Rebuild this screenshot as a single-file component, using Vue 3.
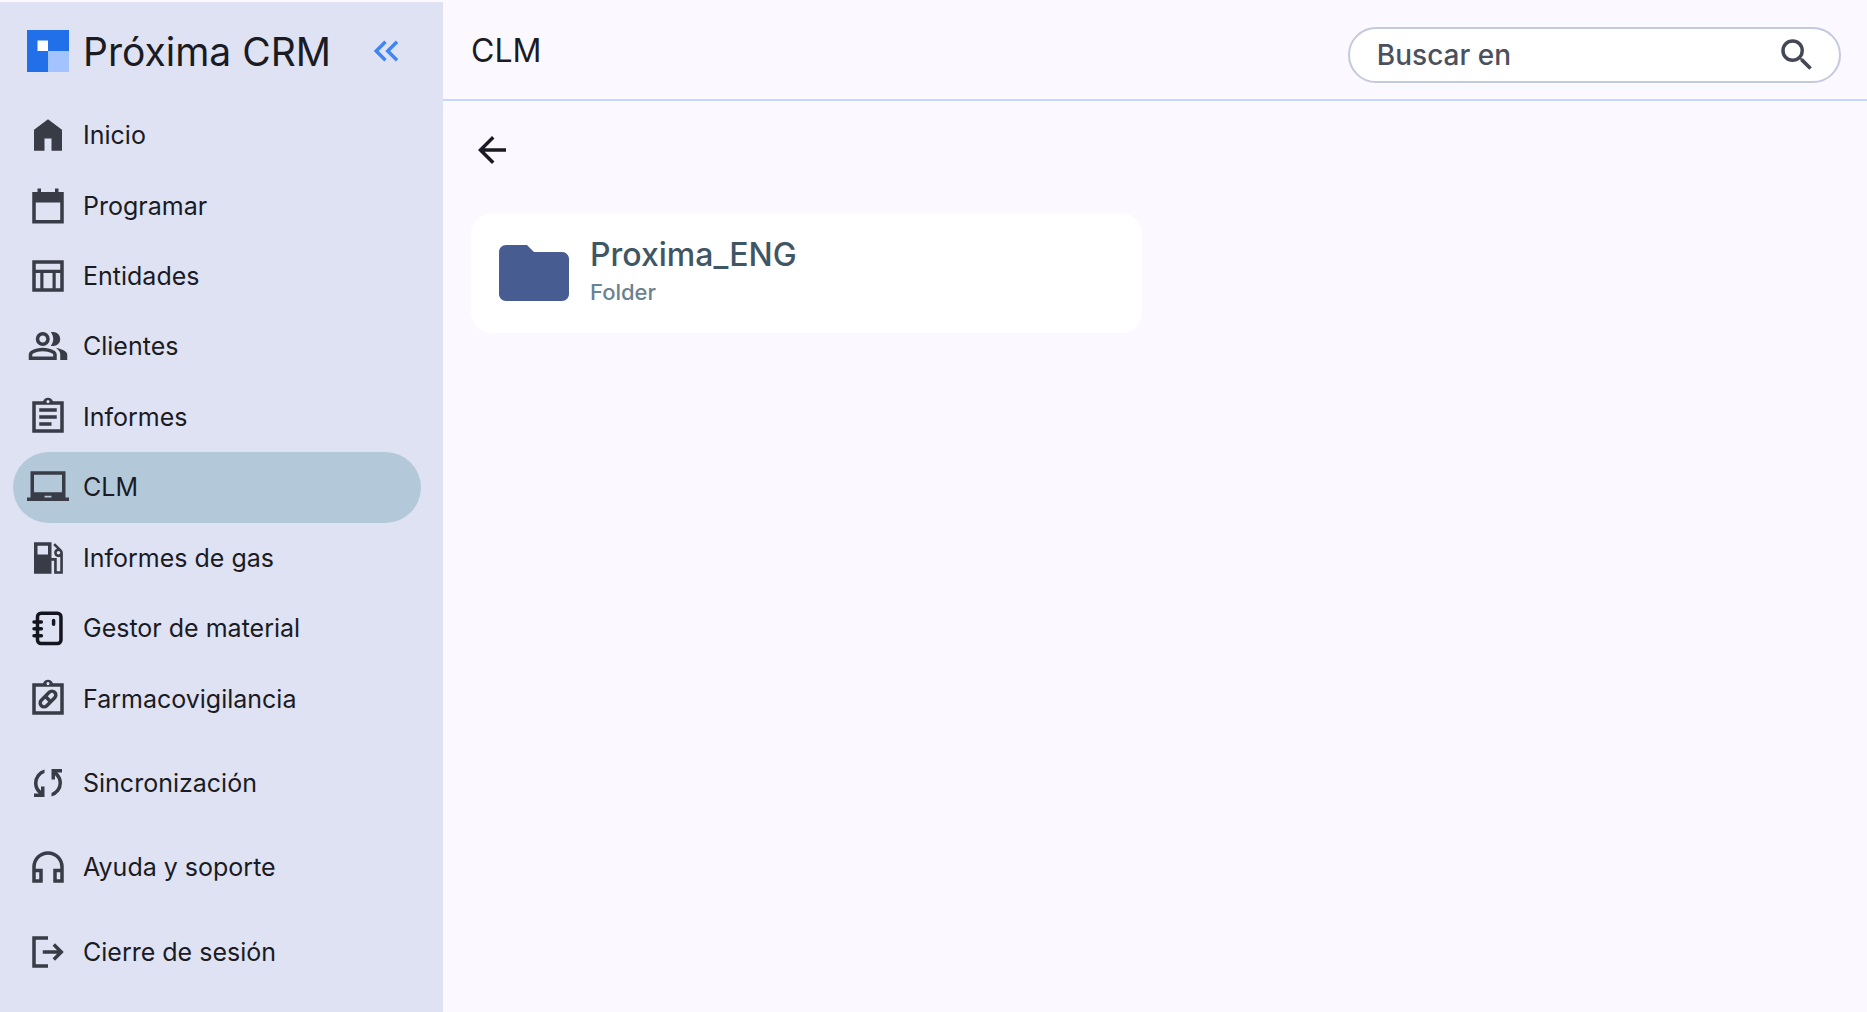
<template>
  <div class="layout">
    <aside class="sidebar">
      <div class="brand">
        <svg class="icon" viewBox="0 0 24 24" aria-hidden="true">
          <path fill="#2170ea" d="M0 0h24v24H0z" />
          <path fill="#a3c3ff" d="M12 12h12v12H12z" />
          <path fill="#ffffff" d="M6 6h6v6H6z" />
        </svg>
        <span class="brand-name">Próxima CRM</span>
        <button class="icon-btn collapse" type="button" aria-label="Contraer menú">
          <svg class="icon" viewBox="0 0 24 24" aria-hidden="true">
            <path d="M17.59 18 19 16.59 14.42 12 19 7.41 17.59 6l-6 6zM11 18l1.41-1.41L7.83 12l4.58-4.59L11 6l-6 6z" />
          </svg>
        </button>
      </div>

      <nav class="menu">
        <a
          v-for="item in items"
          :key="item.label"
          href="#"
          :class="['menu-item', { active: item.label === current, spaced: item.spaced }]"
          @click.prevent="current = item.label"
        >
          <svg v-if="item.icon === 'notebook'" class="icon notebook" viewBox="0 0 24 24" aria-hidden="true">
            <rect x="6" y="3.5" width="13.4" height="17.4" rx="2" />
            <path d="M4 8.6h4.2M4 12.4h4.2M4 16.4h4.2M15.2 7.7v2.2" />
          </svg>
          <svg v-else-if="item.icon === 'pill'" class="icon" viewBox="0 0 24 24" aria-hidden="true">
            <path fill-rule="evenodd" :d="clipboard" />
            <g class="capsule" transform="rotate(-45 12 12)">
              <rect x="6.6" y="9.8" width="10.8" height="4.4" rx="2.2" />
              <path d="M12 10v4" />
            </g>
          </svg>
          <svg v-else class="icon" :viewBox="item.box || '0 -960 960 960'" aria-hidden="true">
            <path fill-rule="evenodd" :d="item.icon" />
          </svg>
          <span>{{ item.label }}</span>
        </a>
      </nav>
    </aside>

    <main class="content">
      <header class="topbar">
        <h1 class="page-title">CLM</h1>
        <form class="search" role="search" @submit.prevent>
          <input v-model="query" class="search-input" type="text" placeholder="Buscar en" aria-label="Buscar en" />
          <button class="icon-btn" type="submit" aria-label="Buscar">
            <svg class="icon" viewBox="0 0 24 24" aria-hidden="true">
              <path d="M15.5 14h-.79l-.28-.27A6.47 6.47 0 0 0 16 9.5 6.5 6.5 0 1 0 9.5 16c1.61 0 3.09-.59 4.23-1.57l.27.28v.79l5 4.99L20.49 19zm-6 0a4.5 4.5 0 1 1 0-9 4.5 4.5 0 0 1 0 9z" />
            </svg>
          </button>
        </form>
      </header>

      <section class="browser">
        <button class="icon-btn back" type="button" aria-label="Volver">
          <svg class="icon" viewBox="0 -960 960 960" aria-hidden="true">
            <path d="m313-440 224 224-57 56-320-320 320-320 57 56-224 224h487v80H313Z" />
          </svg>
        </button>

        <div class="grid">
          <a v-for="entry in entries" :key="entry.name" href="#" class="card" @click.prevent>
            <svg class="folder" viewBox="0 0 24 24" aria-hidden="true">
              <path d="M10 4H4c-1.1 0-1.99.9-1.99 2L2 18c0 1.1.9 2 2 2h16c1.1 0 2-.9 2-2V8c0-1.1-.9-2-2-2h-8l-2-2z" />
            </svg>
            <span class="card-text">
              <span class="card-name">{{ entry.name }}</span>
              <span class="card-kind">{{ entry.kind }}</span>
            </span>
          </a>
        </div>
      </section>
    </main>
  </div>
</template>

<script setup>
import { ref } from 'vue'

const current = ref('CLM')
const query = ref('')

const clipboard = 'M3 21V3h6.2a2.95 2.95 0 0 1 5.6 0H21v18H3zm2-2h14V5H5v14zM12 4.1a.9.9 0 1 0 0-1.8.9.9 0 0 0 0 1.8z'

const items = [
  { label: 'Inicio', box: '0 0 24 24', icon: 'M4 21V9l8-6 8 6v12h-6v-7h-4v7z' },
  { label: 'Programar', box: '0 0 24 24', icon: 'M3 22V4h3V2h2v2h8V2h2v2h3v18H3zm2-2h14V10H5z' },
  {
    label: 'Entidades',
    box: '0 0 24 24',
    icon: 'M3 3h18v18H3zM5 5v3.4h14V5zM5 10.3V19h2.6v-8.7zM9.4 10.3V19h5.2v-8.7zM16.4 10.3V19H19v-8.7z',
  },
  {
    label: 'Clientes',
    icon: 'M40-160v-112q0-34 17.5-62.5T104-378q62-31 126-46.5T360-440q66 0 130 15.5T616-378q29 15 46.5 43.5T680-272v112H40Zm720 0v-120q0-44-24.5-84.5T666-434q51 6 96 20.5t84 35.5q36 20 55 44.5t19 53.5v120H760ZM360-480q-66 0-113-47t-47-113q0-66 47-113t113-47q66 0 113 47t47 113q0 66-47 113t-113 47Zm400-160q0 66-47 113t-113 47q-11 0-28-2.5t-28-5.5q27-32 41.5-71t14.5-81q0-42-14.5-81T544-792q14-5 28-6.5t28-1.5q66 0 113 47t47 113ZM120-240h480v-32q0-11-5.5-20T580-306q-54-27-109-40.5T360-360q-56 0-111 13.5T140-306q-9 5-14.5 14t-5.5 20v32Zm240-320q33 0 56.5-23.5T440-640q0-33-23.5-56.5T360-720q-33 0-56.5 23.5T280-640q0 33 23.5 56.5T360-560Z',
  },
  { label: 'Informes', box: '0 0 24 24', icon: clipboard + 'M7 17h7v-2H7zM7 13h10v-2H7zM7 9h10V7H7z' },
  { label: 'CLM', box: '0 0 24 24', icon: 'M0 20v-2h2V3h20v15h2v2zM10 18h4v-1h-4zM4 15h16V5H4z' },
  {
    label: 'Informes de gas',
    box: '0 0 24 24',
    icon: 'm19.77 7.23.01-.01-3.72-3.72L15 4.56l2.11 2.11a2.5 2.5 0 0 0 .89 4.83c.36 0 .69-.08 1-.21v8.21h-2V12h-3V3H4v18h10v-7.5h1.5V21h5V9c0-.69-.28-1.32-.73-1.77zM12 10H6V5h6v5zm6 0c-.55 0-1-.45-1-1s.45-1 1-1 1 .45 1 1-.45 1-1 1z',
  },
  { label: 'Gestor de material', icon: 'notebook' },
  { label: 'Farmacovigilancia', icon: 'pill' },
  {
    label: 'Sincronización',
    spaced: true,
    icon: 'M160-160v-80h110l-16-14q-52-46-73-105t-21-119q0-111 66.5-197.5T400-790v84q-72 26-116 88.5T240-478q0 45 17 87.5t53 78.5l10 10v-98h80v240H160Zm400-10v-84q72-26 116-88.5T720-482q0-45-17-87.5T650-648l-10-10v98h-80v-240h240v80H690l16 14q49 49 71.5 106.5T800-482q0 111-66.5 197.5T560-170Z',
  },
  {
    label: 'Ayuda y soporte',
    spaced: true,
    icon: 'M360-120H120v-360q0-75 28.5-140.5t77-114q48.5-48.5 114-77T480-840q75 0 140.5 28.5t114 77q48.5 48.5 77 114T840-480v360H600v-320h160v-40q0-117-81.5-198.5T480-760q-117 0-198.5 81.5T200-480v40h160v320Zm-80-240h-80v160h80v-160Zm400 0v160h80v-160h-80Z',
  },
  {
    label: 'Cierre de sesión',
    spaced: true,
    icon: 'M120-120v-720h360v80H200v560h280v80H120Zm520-160-55-58 102-102H360v-80h327L585-622l55-58 200 200-200 200Z',
  },
]

const entries = [{ name: 'Proxima_ENG', kind: 'Folder' }]
</script>

<style>
body {
  background: #fbf8ff;
}
</style>

<style scoped>
.layout {
  display: flex;
  box-sizing: border-box;
  min-height: 100vh;
  padding-top: 2px;
  font-family: Inter, 'Noto Sans', sans-serif;
  color: #1a1b23;
}

.sidebar {
  display: flex;
  flex-direction: column;
  flex: 0 0 443px;
  background: #dfe2f3;
}

.brand {
  display: flex;
  align-items: center;
  gap: 14px;
  height: 98px;
  padding: 0 36px 0 27px;
}

.brand-name {
  flex: 1;
  font-size: 39px;
  white-space: nowrap;
}

.icon {
  display: block;
  flex: none;
  width: 42px;
  height: 42px;
  fill: currentColor;
}

.icon-btn {
  padding: 0;
  border: 0;
  background: none;
  color: inherit;
  cursor: pointer;
}

.collapse {
  color: #3f86f4;
}

.menu {
  display: flex;
  flex: 1;
  flex-direction: column;
  padding: 0 22px 25px 13px;
}

.menu-item {
  display: flex;
  flex: 1;
  align-items: center;
  gap: 14px;
  min-height: 56px;
  padding: 0 14px;
  border-radius: 36px;
  font-size: 25px;
  color: #1a1b23;
  text-decoration: none;
}

.menu-item.spaced {
  margin-top: 14px;
}

.menu-item.active {
  background: #b3c9d9;
}

.menu-item .icon {
  color: #393b46;
}

.menu-item .notebook {
  fill: none;
  stroke: #14151e;
  stroke-width: 2;
  stroke-linecap: round;
}

.capsule {
  fill: none;
  stroke: currentColor;
  stroke-width: 2;
}

.content {
  flex: 1;
  min-width: 0;
}

.topbar {
  display: flex;
  align-items: center;
  justify-content: space-between;
  height: 97px;
  padding: 0 26px 0 28px;
  border-bottom: 2px solid #c4d7ff;
}

.page-title {
  margin: 0;
  font-size: 32px;
  font-weight: 400;
}

.search {
  display: flex;
  align-items: center;
  box-sizing: border-box;
  width: 36%;
  height: 56px;
  margin-top: 8px;
  padding: 0 21px 0 27px;
  border: 2px solid #c5c9dc;
  border-radius: 28px;
  background: #ffffff;
  color: #444854;
}

.search-input {
  flex: 1;
  min-width: 0;
  padding: 0;
  border: 0;
  outline: 0;
  background: none;
  font: inherit;
  font-size: 28px;
  font-weight: 500;
  color: inherit;
}

.search-input::placeholder {
  color: #4c505d;
  opacity: 1;
}

.browser {
  padding: 28px 26px 28px 28px;
}

.grid {
  display: grid;
  grid-template-columns: repeat(2, 1fr);
  gap: 28px;
  margin-top: 38px;
}

.card {
  display: flex;
  align-items: center;
  gap: 14px;
  box-sizing: border-box;
  min-height: 120px;
  padding: 14px 21px;
  border-radius: 21px;
  background: #ffffff;
  text-decoration: none;
}

.folder {
  flex: none;
  width: 84px;
  height: 84px;
  fill: #475d92;
}

.card-text {
  display: flex;
  flex-direction: column;
  padding-bottom: 4px;
}

.card-name {
  font-size: 32px;
  font-weight: 500;
  line-height: 42px;
  color: #3f5664;
}

.card-kind {
  font-size: 22px;
  font-weight: 500;
  line-height: 32px;
  color: #6a8291;
}
</style>
